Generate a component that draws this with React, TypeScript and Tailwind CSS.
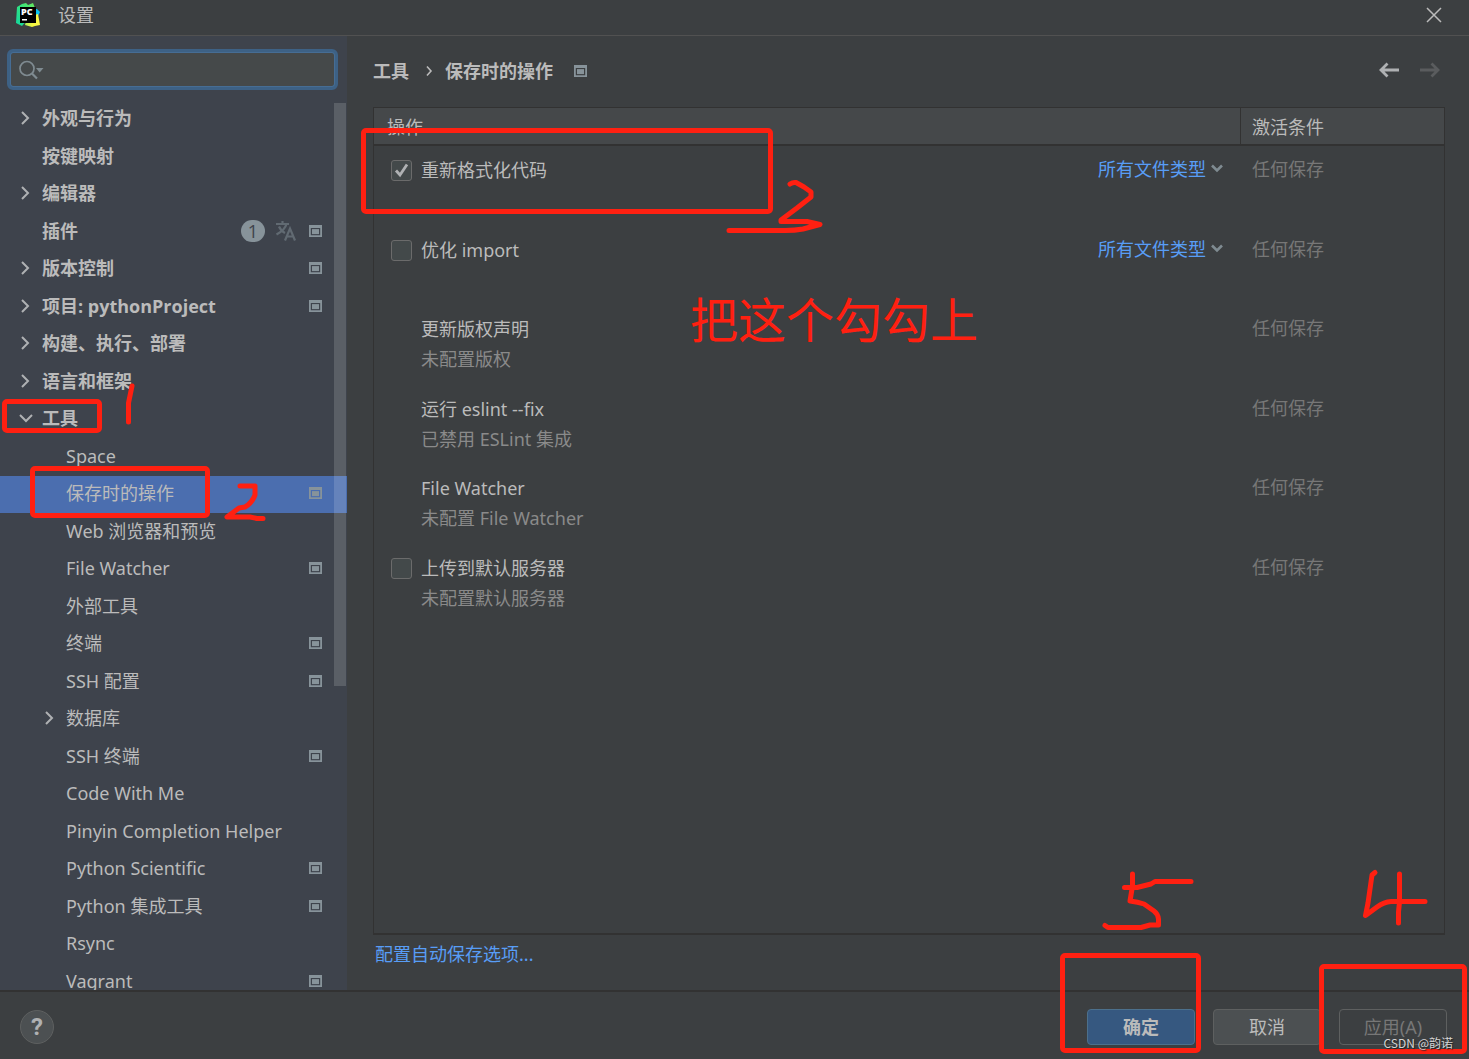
import React, { useState } from "react";

type TreeItem = {
  label: string;
  level: 0 | 1;
  arrow?: "right" | "down";
  project?: boolean;
  plugins?: boolean;
  selected?: boolean;
};

const treeItems: TreeItem[] = [
  { label: "外观与行为", level: 0, arrow: "right" },
  { label: "按键映射", level: 0 },
  { label: "编辑器", level: 0, arrow: "right" },
  { label: "插件", level: 0, project: true, plugins: true },
  { label: "版本控制", level: 0, arrow: "right", project: true },
  { label: "项目: pythonProject", level: 0, arrow: "right", project: true },
  { label: "构建、执行、部署", level: 0, arrow: "right" },
  { label: "语言和框架", level: 0, arrow: "right" },
  { label: "工具", level: 0, arrow: "down" },
  { label: "Space", level: 1 },
  { label: "保存时的操作", level: 1, project: true, selected: true },
  { label: "Web 浏览器和预览", level: 1 },
  { label: "File Watcher", level: 1, project: true },
  { label: "外部工具", level: 1 },
  { label: "终端", level: 1, project: true },
  { label: "SSH 配置", level: 1, project: true },
  { label: "数据库", level: 1, arrow: "right" },
  { label: "SSH 终端", level: 1, project: true },
  { label: "Code With Me", level: 1 },
  { label: "Pinyin Completion Helper", level: 1 },
  { label: "Python Scientific", level: 1, project: true },
  { label: "Python 集成工具", level: 1, project: true },
  { label: "Rsync", level: 1 },
  { label: "Vagrant", level: 1, project: true },
];

type ActionItem = {
  id: string;
  title: string;
  note?: string;
  checkbox?: boolean;
  checked?: boolean;
  fileTypes?: boolean;
};

const actionItems: ActionItem[] = [
  { id: "reformat", title: "重新格式化代码", checkbox: true, checked: true, fileTypes: true },
  { id: "imports", title: "优化 import", checkbox: true, fileTypes: true },
  { id: "copyright", title: "更新版权声明", note: "未配置版权" },
  { id: "eslint", title: "运行 eslint --fix", note: "已禁用 ESLint 集成" },
  { id: "watcher", title: "File Watcher", note: "未配置 File Watcher" },
  { id: "upload", title: "上传到默认服务器", note: "未配置默认服务器", checkbox: true },
];

function PyCharmLogo() {
  return (
    <svg width="24" height="24" viewBox="0 0 24 24" aria-hidden="true">
      <defs>
        <linearGradient id="logo-green" x1="0" y1="1" x2="1" y2="0">
          <stop offset="0" stopColor="#12d6a0" />
          <stop offset="0.5" stopColor="#2fe283" />
          <stop offset="1" stopColor="#6be85a" />
        </linearGradient>
        <linearGradient id="logo-yellow" x1="0" y1="0" x2="1" y2="0">
          <stop offset="0" stopColor="#a5f05a" />
          <stop offset="0.5" stopColor="#f4f63f" />
          <stop offset="1" stopColor="#fcf84a" />
        </linearGradient>
      </defs>
      <path d="M1 4 L6 1 L10 0 L12 2 L17 0 L19 5 L14 14 L6 23 L0 20 Z" fill="url(#logo-green)" />
      <path d="M18 6 L21 6 L24 9 L22 13 L19 14 Z" fill="#07c3f2" />
      <path d="M19 12 L22 11 L24 22 L19 23 L16 24 L9 22 L10 18 Z" fill="url(#logo-yellow)" />
      <rect x="4" y="4" width="16" height="16" fill="#000000" />
      <text x="5" y="12" fontSize="9" fontWeight="800" fontFamily="Open Sans, sans-serif" fill="#ffffff">
        PC
      </text>
      <rect x="6" y="16" width="5" height="1.5" fill="#ffffff" />
    </svg>
  );
}

function ProjectIcon() {
  return (
    <svg width="13" height="12" viewBox="0 0 13 12" className="shrink-0" aria-hidden="true">
      <path fillRule="evenodd" fill="#87939a" d="M0 0H13V12H0Z M1.8 3V10.2H11.2V3Z" />
      <rect x="3" y="4.1" width="7" height="5" fill="#87939a" />
    </svg>
  );
}

function TranslateIcon() {
  return (
    <svg width="22" height="22" viewBox="0 0 22 22" fill="none" stroke="#616a72" strokeWidth="2.2" aria-hidden="true">
      <path d="M1 4 H14 M7.500 1 V4 M11.500 4 Q10 10 1.500 14.500 M4 6.500 Q6 11 10 13" />
      <path d="M10 20.500 L15 8.500 L20 20.500 M12 16.500 H18" />
    </svg>
  );
}

function ChevronRight() {
  return (
    <svg width="16" height="16" viewBox="0 0 16 16" fill="none" stroke="#afb1b3" strokeWidth="2" aria-hidden="true">
      <path d="M4 2 L10 8 L4 14" />
    </svg>
  );
}

function ChevronDown() {
  return (
    <svg width="16" height="16" viewBox="0 0 16 16" fill="none" stroke="#afb1b3" strokeWidth="2" aria-hidden="true">
      <path d="M2 5 L8 11 L14 5" />
    </svg>
  );
}

function TreeRow({ item }: { item: TreeItem }) {
  return (
    <li className="odd:h-[37px] even:h-[38px]">
      <button
        type="button"
        className={
          "flex h-full w-full items-center pr-[25px] pb-[3px] text-left " +
          (item.level === 0 ? "pl-[18px] font-['Open_Sans','Noto_Sans_CJK_SC',sans-serif] font-bold " : "pl-[42px] ") +
          (item.selected ? "bg-[#4b6eaf]" : "")
        }
      >
        <span className="flex w-6 shrink-0 items-center">
          {item.arrow === "right" && <ChevronRight />}
          {item.arrow === "down" && <ChevronDown />}
        </span>
        <span className="flex-1 whitespace-nowrap">{item.label}</span>
        {item.plugins && (
          <span className="mr-3 flex items-center gap-2.5 font-normal">
            <span className="flex h-[22px] w-6 items-center justify-center rounded-full bg-[#87939a] text-[#3e434c]">
              1
            </span>
            <TranslateIcon />
          </span>
        )}
        {item.project && <ProjectIcon />}
      </button>
    </li>
  );
}

function Sidebar() {
  return (
    <aside className="relative flex w-[347px] shrink-0 flex-col bg-[#3e434c]">
      <div className="mt-[13px] mr-[9px] ml-[7px] flex h-[41px] shrink-0 items-center rounded-md border-4 border-[#3d6185] bg-[#45494a] px-2 outline-1 -outline-offset-4 outline-[#466d94]">
        <svg width="26" height="20" viewBox="0 0 26 20" fill="none" stroke="#7f8b91" strokeWidth="1.7" aria-hidden="true">
          <circle cx="8" cy="8.5" r="7" />
          <path d="M13 13.5 L18 18.5" strokeWidth="2.2" />
          <path d="M17 8 H24.500 L20.700 12.500 Z" fill="#7f8b91" stroke="none" />
        </svg>
        <input type="text" aria-label="搜索设置" className="min-w-0 flex-1 bg-transparent outline-none" />
      </div>
      <ul className="mt-[11px] min-h-0 flex-1 overflow-hidden">
        {treeItems.map((item) => (
          <TreeRow key={item.label} item={item} />
        ))}
      </ul>
      <div className="absolute top-[67px] right-px h-[583px] w-3 bg-white/15" />
    </aside>
  );
}

function CheckBox({ id, initial }: { id: string; initial: boolean }) {
  const [checked, setChecked] = useState(initial);
  return (
    <span className="relative flex">
      <input
        id={id}
        type="checkbox"
        checked={checked}
        onChange={(event) => setChecked(event.target.checked)}
        className="h-[21px] w-[21px] appearance-none rounded-[3px] border border-[#6b6b6b] bg-[#43494a]"
      />
      {checked && (
        <svg
          width="21"
          height="21"
          viewBox="0 0 21 21"
          fill="none"
          stroke="#afb1b3"
          strokeWidth="2.8"
          className="pointer-events-none absolute inset-0"
          aria-hidden="true"
        >
          <path d="M5 10.500 L9 15 L16 4.500" />
        </svg>
      )}
    </span>
  );
}

function FileTypeSelect({ label }: { label: string }) {
  return (
    <span className="flex items-center justify-end gap-1">
      <select aria-label={label} className="appearance-none bg-transparent text-[#589df6]">
        <option>所有文件类型</option>
      </select>
      <svg width="14" height="10" viewBox="0 0 14 10" fill="none" stroke="#7f8b91" strokeWidth="2.6" aria-hidden="true">
        <path d="M2 1.500 L7 6.500 L12 1.500" />
      </svg>
    </span>
  );
}

function ActionRow({ item }: { item: ActionItem }) {
  return (
    <tr className="align-top leading-[30px] odd:h-20 even:h-[79px]">
      <td className="pt-[9px] pl-[17px]">
        <div className="grid grid-cols-[21px_1fr] items-center gap-x-[9px]">
          {item.checkbox ? <CheckBox id={item.id} initial={!!item.checked} /> : <span />}
          {item.checkbox ? <label htmlFor={item.id}>{item.title}</label> : <span>{item.title}</span>}
          {item.note && <span className="col-start-2 text-[#8a8a8a]">{item.note}</span>}
        </div>
      </td>
      <td className="pt-2 pr-4">{item.fileTypes && <FileTypeSelect label={item.title} />}</td>
      <td className="pt-2 pl-3 text-[#777777]">任何保存</td>
    </tr>
  );
}

function MainPanel() {
  return (
    <main className="flex min-w-0 flex-1 flex-col pr-6 pl-[26px]">
      <div className="flex h-[71px] shrink-0 items-center pb-0.5">
        <h1 className="flex items-center font-bold">
          <span>工具</span>
          <svg width="36" height="14" viewBox="0 0 36 14" fill="none" stroke="#bbbbbb" strokeWidth="1.6" aria-hidden="true">
            <path d="M18 2.500 L22 7 L18 11.500" />
          </svg>
          <span className="mr-[21px]">保存时的操作</span>
          <ProjectIcon />
        </h1>
        <div className="mr-[5px] ml-auto flex gap-[21px] pb-0.5">
          <button type="button" aria-label="后退">
            <svg width="20" height="16" viewBox="0 0 20 16" fill="none" stroke="#afb1b3" strokeWidth="2.8" aria-hidden="true">
              <path d="M20 8 H2 M8.500 1.500 L2 8 L8.500 14.500" />
            </svg>
          </button>
          <button type="button" aria-label="前进" disabled>
            <svg width="20" height="16" viewBox="0 0 20 16" fill="none" stroke="#5a5c5e" strokeWidth="2.8" aria-hidden="true">
              <path d="M0 8 H18 M11.500 1.500 L18 8 L11.500 14.500" />
            </svg>
          </button>
        </div>
      </div>
      <div className="min-h-0 flex-1 border border-b-2 border-[#323232]">
        <table className="w-full table-fixed border-separate border-spacing-0 text-left">
          <colgroup>
            <col />
            <col className="w-[200px]" />
            <col className="w-[204px]" />
          </colgroup>
          <thead>
            <tr className="h-[38px] bg-[#45484a]">
              <th colSpan={2} className="border-b-2 border-[#323232] pt-px pl-[13px] font-normal">
                操作
              </th>
              <th className="border-b-2 border-l border-[#323232] pt-px pl-[11px] font-normal">激活条件</th>
            </tr>
          </thead>
          <tbody>
            {actionItems.map((item) => (
              <ActionRow key={item.id} item={item} />
            ))}
          </tbody>
        </table>
      </div>
      <div className="flex h-[55px] shrink-0 items-start pt-[5px] pl-0.5">
        <a href="#autosave" className="text-[#589df6]">
          配置自动保存选项...
        </a>
      </div>
    </main>
  );
}

function Footer() {
  return (
    <footer className="flex h-[69px] shrink-0 items-center border-t-2 border-[#323232] pt-0.5 pr-[22px] pl-5">
      <button
        type="button"
        aria-label="帮助"
        className="flex h-[34px] w-[34px] items-center justify-center rounded-full border border-[#5e6060] bg-[#4c5052] font-['Roboto',sans-serif] text-2xl font-bold text-[#afb1b3]"
      >
        ?
      </button>
      <div className="ml-auto flex gap-[18px]">
        <button type="button" className="h-9 w-[108px] rounded-[4px] border border-[#4c708c] bg-[#365880] font-bold">
          确定
        </button>
        <button type="button" className="h-9 w-[108px] rounded-[4px] border border-[#5e6060] bg-[#4c5052]">
          取消
        </button>
        <button
          type="button"
          disabled
          className="h-9 w-[108px] rounded-[4px] border border-[#5e6060] text-[#777777]"
        >
          应用(A)
        </button>
      </div>
    </footer>
  );
}

function Annotations() {
  return (
    <div className="pointer-events-none absolute inset-0 overflow-hidden">
      <div className="absolute top-[399px] left-[2px] h-[34px] w-[100px] rounded-[5px] border-[5px] border-[#ff2011]" />
      <div className="absolute top-[466px] left-[30px] h-[52px] w-[180px] rounded-[5px] border-[5px] border-[#ff2011]" />
      <div className="absolute top-[128px] left-[361px] h-[86px] w-[412px] rounded-[5px] border-[5px] border-[#ff2011]" />
      <div className="absolute right-[268px] bottom-[6px] h-[100px] w-[141px] rounded-[5px] border-[5px] border-[#ff2011]" />
      <div className="absolute right-[2px] bottom-[5px] h-[90px] w-[148px] rounded-[5px] border-[5px] border-[#ff2011]" />
      <p className="absolute top-[284px] left-[690px] text-5xl leading-[72px] whitespace-nowrap text-[#ff2011]">
        把这个勾勾上
      </p>
      <svg
        width="840"
        height="540"
        viewBox="0 0 840 540"
        fill="none"
        stroke="#ff2011"
        strokeWidth="5"
        strokeLinecap="round"
        strokeLinejoin="round"
        className="absolute top-0 left-0"
        aria-hidden="true"
      >
        <path d="M132 386 L128.500 403 L128.500 422" />
        <path d="M240 486 L255 486 L255 495 Q252 503 245 507 L239 508 L227 517 L250 517 L257 518.500 L263 518.500" />
        <path d="M790 184 Q793 182 796 182.500 L804 187 L811 192 V197 L797 208 L781 220 V221.500 H807 L820 224.500 L803 229 Q795 230.500 785 230.500 H729" />
      </svg>
      <svg
        width="400"
        height="200"
        viewBox="1069 859 400 200"
        fill="none"
        stroke="#ff2011"
        strokeWidth="5"
        strokeLinecap="round"
        strokeLinejoin="round"
        className="absolute right-0 bottom-0"
        aria-hidden="true"
      >
        <path d="M1132.500 874 V886 L1130 901 Q1138 902 1144 904 L1154 911 Q1158 914 1158.500 919 V925 H1150 L1141 927.500 H1108 L1105 925.500" />
        <path d="M1124.500 887.500 H1137 L1151 884 L1155 881.500 H1191" />
        <path d="M1375 872.500 L1372 875 L1368 903 L1365.500 915.500 L1377 907 Q1384 902 1391 901.500 H1425" />
        <path d="M1399.500 874 V902 L1398.500 912 V923" />
      </svg>
      <span className="absolute right-4 bottom-2 font-['Noto_Sans_CJK_SC',sans-serif] text-xs leading-4 text-[#d4d4d4] [text-shadow:1px_1px_1px_#222222]">
        CSDN @韵诺
      </span>
    </div>
  );
}

export default function App() {
  return (
    <div className="relative flex h-screen flex-col overflow-hidden bg-[#3c3f41] font-['Noto_Sans','Noto_Sans_CJK_SC',sans-serif] text-lg leading-7 text-[#bbbbbb]">
      <header className="flex h-9 shrink-0 items-center border-b border-[#515151] pr-[27px] pb-1.5 pl-4">
        <span className="mr-[18px]">
          <PyCharmLogo />
        </span>
        <span className="flex-1">设置</span>
        <button type="button" aria-label="关闭">
          <svg width="16" height="16" viewBox="0 0 16 16" fill="none" stroke="#bbbbbb" strokeWidth="1.5" aria-hidden="true">
            <path d="M1 1 L15 15 M15 1 L1 15" />
          </svg>
        </button>
      </header>
      <div className="flex min-h-0 flex-1">
        <Sidebar />
        <MainPanel />
      </div>
      <Footer />
      <Annotations />
    </div>
  );
}
